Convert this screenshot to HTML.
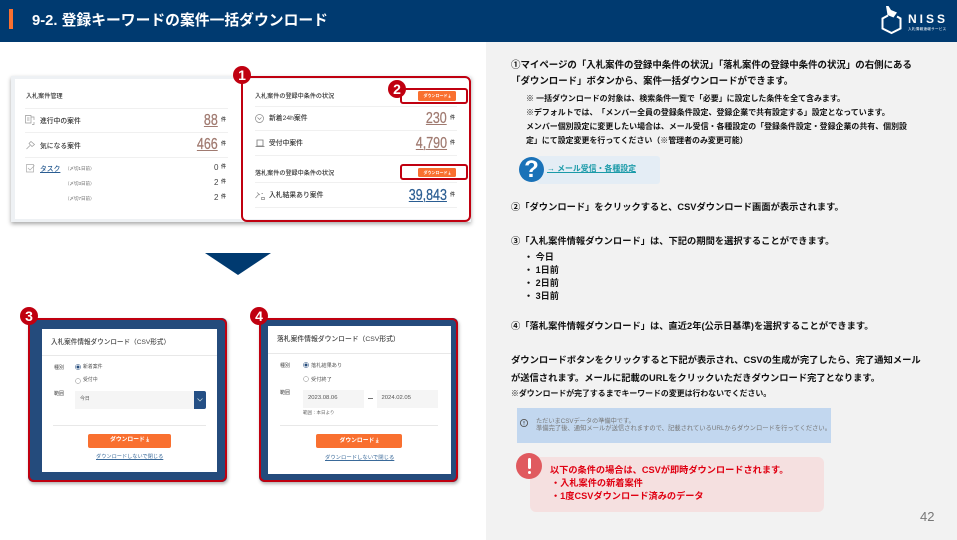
<!DOCTYPE html>
<html lang="ja"><head><meta charset="utf-8">
<style>
html,body{margin:0;padding:0;background:#fff}
#p{position:relative;width:957px;height:540px;overflow:hidden;background:#fff;font-family:"Liberation Sans","Noto Sans CJK JP",sans-serif;color:#333;filter:blur(.3px)}
#p div,#p span.t,#p a{position:absolute}
.t{white-space:nowrap;line-height:1;position:absolute}
.b{font-weight:700;color:#111}
.r{border:2px solid #c00010;box-sizing:border-box;border-radius:6px}
.n{width:18px;height:18px;border-radius:50%;background:#c00010;color:#fff;font:700 14px/18px "Liberation Sans",sans-serif;text-align:center}
.l{height:1px;background:#f0f0f0}
.num{font-family:"Liberation Sans",sans-serif;text-decoration:underline;text-decoration-thickness:1px;transform:scaleX(.78);transform-origin:100% 50%;color:#a07a70;font-size:16px;-webkit-text-stroke:.25px currentColor}
.btn{background:#f97030;border-radius:1.5px;color:#fff;font-weight:700;text-align:center}
.m{font-size:6.8px;color:#333;font-weight:500}
.s{font-size:6.1px;color:#333;font-weight:500}
.k{font-size:5px;color:#444;font-weight:700}
svg{position:absolute;overflow:visible}
</style></head><body><div id="p">
<div style="left:0;top:0;width:957px;height:42px;background:#003a70"></div>
<div style="left:9px;top:9px;width:4px;height:20px;background:#f97030"></div>
<span class="t" style="left:32px;top:13.500px;font-size:14.800px;font-weight:700;color:#fff">9-2. 登録キーワードの案件一括ダウンロード</span>

<svg style="left:879px;top:5px" width="26" height="30" viewBox="0 0 26 30"><path d="M9 10.500 L3.500 13.500 V23.500 L12.500 28 L21.500 23.500 V13.500 L18 11.500" fill="none" stroke="#fff" stroke-width="2"/><path d="M7 1 L9.500 1 L12 5 L18 7.500 L14.500 12.500 L8.500 10Z" fill="#fff"/></svg>
<span class="t" style="left:908px;top:12.500px;font-size:12px;font-weight:700;color:#fff;letter-spacing:3px">NISS</span>
<span class="t" style="left:908px;top:28px;font-size:3.700px;color:#fff;letter-spacing:.15px">入札情報速報サービス</span>

<div style="left:486px;top:42px;width:471px;height:498px;background:#f2f2f2"></div>

<!-- left card -->
<div style="left:11px;top:76px;width:460px;height:146px;background:#eef1f4;box-shadow:0 2px 4px rgba(0,0,0,.35)"></div>
<div style="left:15px;top:79px;width:454px;height:140px;background:#fff"></div>
<span class="t s" style="left:26px;top:93.500px">入札案件管理</span>
<div class="l" style="left:25px;top:108px;width:203px"></div>
<div class="l" style="left:25px;top:132px;width:203px"></div>
<div class="l" style="left:25px;top:157px;width:203px"></div>
<svg style="left:25px;top:115px" width="10" height="10" fill="none" stroke="#999" stroke-width=".7"><path d="M.5 .5H6V8H.5ZM6 2H9V5M7 9.500H9V7M2 3H4.500M2 5H4.500"/></svg>
<span class="t m" style="left:40px;top:119px">進行中の案件</span>
<span class="t num" style="right:739px;top:113px">88</span><span class="t k" style="left:221px;top:118px">件</span>
<svg style="left:26px;top:140px" width="9" height="10" fill="none" stroke="#999" stroke-width=".7"><path d="M.5 9L4 5.500M3 3.500L6 6.500M5 1.500L8.500 4.500L6 6.500L3 3.500Z"/></svg>
<span class="t m" style="left:40px;top:144px">気になる案件</span>
<span class="t num" style="right:739px;top:137px">466</span><span class="t k" style="left:221px;top:142px">件</span>
<svg style="left:26px;top:164px" width="9" height="9" fill="none" stroke="#aaa" stroke-width=".7"><path d="M.5 .5H7.500V8H.5ZM2 4L4 6L8.500 1.500"/></svg>
<span class="t" style="left:40px;top:166.500px;font-size:6.800px;font-weight:500;color:#2a5d92;text-decoration:underline">タスク</span>
<span class="t" style="left:65px;top:166.500px;font-size:4.500px;color:#666">（〆切1日前）</span>
<span class="t" style="left:65px;top:181.500px;font-size:4.500px;color:#666">（〆切3日前）</span>
<span class="t" style="left:65px;top:196.500px;font-size:4.500px;color:#666">（〆切7日前）</span>
<span class="t" style="left:214px;top:164px;font-size:8px;color:#444">0</span><span class="t k" style="left:221px;top:165px">件</span>
<span class="t" style="left:214px;top:179px;font-size:8px;color:#444">2</span><span class="t k" style="left:221px;top:180px">件</span>
<span class="t" style="left:214px;top:194px;font-size:8px;color:#444">2</span><span class="t k" style="left:221px;top:195px">件</span>

<span class="t s" style="left:255px;top:93.500px">入札案件の登録中条件の状況</span>
<div class="l" style="left:255px;top:106px;width:202px"></div>
<div class="l" style="left:255px;top:130px;width:202px"></div>
<div class="l" style="left:255px;top:155px;width:202px"></div>
<div class="l" style="left:255px;top:182px;width:202px"></div>
<div class="l" style="left:255px;top:207px;width:202px"></div>
<svg style="left:255px;top:114px" width="10" height="10" fill="none" stroke="#888" stroke-width=".7"><circle cx="4.500" cy="4.500" r="4"/><path d="M2.500 3.500L4.500 5.500L6.500 3.500"/></svg>
<span class="t m" style="left:269px;top:116px">新着24h案件</span>
<span class="t num" style="right:510px;top:111px">230</span><span class="t k" style="left:450px;top:116px">件</span>
<svg style="left:255px;top:139px" width="10" height="9" fill="none" stroke="#777" stroke-width=".8"><path d="M2 1H8V7H2ZM.5 7.500H9.500"/></svg>
<span class="t m" style="left:269px;top:141px">受付中案件</span>
<span class="t num" style="right:510px;top:136px">4,790</span><span class="t k" style="left:450px;top:141px">件</span>
<span class="t s" style="left:255px;top:170.500px">落札案件の登録中条件の状況</span>
<svg style="left:255px;top:191px" width="10" height="10" fill="none" stroke="#888" stroke-width=".7"><path d="M.5 7L4 3M2 1.500L5 4M6.500 2.500H8M6.500 8.500H9.500V6.500H6.500Z"/></svg>
<span class="t m" style="left:269px;top:193px">入札結果あり案件</span>
<span class="t num" style="right:510px;top:188px;color:#2a5d92">39,843</span><span class="t k" style="left:450px;top:193px">件</span>

<div class="btn" style="left:418px;top:91px;width:38px;height:9.500px;font-size:4px;line-height:9.500px">ダウンロード ⤓</div>
<div class="btn" style="left:418px;top:167.500px;width:38px;height:9.500px;font-size:4px;line-height:9.500px">ダウンロード ⤓</div>
<div class="r" style="left:241px;top:76px;width:230px;height:146px"></div>
<div class="r" style="left:400px;top:88px;width:67.500px;height:15.500px;border-radius:3px"></div>
<div class="r" style="left:400px;top:164px;width:67.500px;height:15.500px;border-radius:3px"></div>
<div class="n" style="left:233px;top:66px">1</div>
<div class="n" style="left:388px;top:80px">2</div>

<svg style="left:205px;top:253px" width="66" height="22"><path d="M0 0H66L33 22Z" fill="#003a70"/></svg>

<!-- modal 3 -->
<div style="left:28px;top:318px;width:199px;height:164px;background:#244b7c;box-shadow:1px 2px 3px rgba(0,0,0,.3);border-radius:5px"></div>
<div style="left:42px;top:329px;width:175px;height:143px;background:#fff"></div>
<span class="t" style="left:51px;top:339.500px;font-size:6.600px;font-weight:500;color:#444">入札案件情報ダウンロード（CSV形式）</span>
<div class="l" style="left:42px;top:355px;width:175px;background:#e8e8e8"></div>
<span class="t k" style="left:54px;top:365.500px;font-weight:400">種別</span>
<svg style="left:75px;top:364px" width="7" height="7"><circle cx="3" cy="3" r="2.600" fill="#fff" stroke="#244b7c" stroke-width=".5"/><circle cx="3" cy="3" r="1.500" fill="#244b7c"/></svg>
<span class="t" style="left:83px;top:365.500px;font-size:4.900px;color:#555">新着案件</span>
<svg style="left:75px;top:378px" width="7" height="7"><circle cx="3" cy="3" r="2.500" fill="#fff" stroke="#888" stroke-width=".5"/></svg>
<span class="t" style="left:83px;top:379px;font-size:4.900px;color:#555">受付中</span>
<span class="t k" style="left:54px;top:392px;font-weight:400">範囲</span>
<div style="left:75px;top:391px;width:119px;height:18px;background:#f5f5f5"></div>
<div style="left:194px;top:391px;width:12px;height:18px;background:#244f85;border-radius:0 2px 2px 0"></div>
<svg style="left:197px;top:398px" width="6" height="4" fill="none" stroke="#cdd" stroke-width=".7"><path d="M.5 .5L3 3L5.500 .5"/></svg>
<span class="t" style="left:80px;top:398px;font-size:4.900px;color:#555">今日</span>
<div class="l" style="left:53px;top:425px;width:153px;background:#e8e8e8"></div>
<div class="btn" style="left:88px;top:434px;width:83px;height:13.500px;font-size:5.800px;line-height:13.500px;border-radius:2px">ダウンロード ⤓</div>
<span class="t" style="left:96px;top:454.500px;font-size:5.200px;color:#3a6a9a;text-decoration:underline">ダウンロードしないで閉じる</span>
<div class="r" style="left:28px;top:318px;width:199px;height:164px"></div>
<div class="n" style="left:20px;top:307px">3</div>

<!-- modal 4 -->
<div style="left:259px;top:318px;width:199px;height:164px;background:#244b7c;box-shadow:1px 2px 3px rgba(0,0,0,.3);border-radius:5px"></div>
<div style="left:268px;top:326px;width:183px;height:148px;background:#fff"></div>
<span class="t" style="left:277px;top:336.500px;font-size:6.800px;font-weight:500;color:#444">落札案件情報ダウンロード（CSV形式）</span>
<div class="l" style="left:268px;top:353px;width:183px;background:#e8e8e8"></div>
<span class="t k" style="left:280px;top:363.500px;font-weight:400">種別</span>
<svg style="left:303px;top:362px" width="7" height="7"><circle cx="3" cy="3" r="2.600" fill="#fff" stroke="#244b7c" stroke-width=".5"/><circle cx="3" cy="3" r="1.500" fill="#244b7c"/></svg>
<span class="t" style="left:311px;top:363.500px;font-size:5.200px;color:#555">落札結果あり</span>
<svg style="left:303px;top:376px" width="7" height="7"><circle cx="3" cy="3" r="2.500" fill="#fff" stroke="#888" stroke-width=".5"/></svg>
<span class="t" style="left:311px;top:377.500px;font-size:5.200px;color:#555">受付終了</span>
<span class="t k" style="left:280px;top:391px;font-weight:400">範囲</span>
<div style="left:303px;top:390px;width:61px;height:18px;background:#f5f5f5"></div>
<div style="left:377px;top:390px;width:61px;height:18px;background:#f5f5f5"></div>
<span class="t" style="left:308px;top:396px;font-size:5.900px;color:#555">2023.08.06</span>
<span class="t" style="left:381.500px;top:396px;font-size:5.900px;color:#555">2024.02.05</span>
<div style="left:368px;top:398px;width:5px;height:1px;background:#777"></div>
<span class="t" style="left:303px;top:410.500px;font-size:4.500px;color:#666">範囲：本日より</span>
<div class="l" style="left:280px;top:425px;width:158px;background:#e8e8e8"></div>
<div class="btn" style="left:316px;top:434px;width:86px;height:14px;font-size:5.800px;line-height:14px;border-radius:2px">ダウンロード ⤓</div>
<span class="t" style="left:325px;top:455.500px;font-size:5.350px;color:#3a6a9a;text-decoration:underline">ダウンロードしないで閉じる</span>
<div class="r" style="left:259px;top:318px;width:199px;height:164px"></div>
<div class="n" style="left:250px;top:307px">4</div>

<!-- right text -->
<span class="t b" style="left:511px;top:60.500px;font-size:9.450px">①マイページの「入札案件の登録中条件の状況」「落札案件の登録中条件の状況」の右側にある</span>
<span class="t b" style="left:511px;top:77px;font-size:9.450px">「ダウンロード」ボタンから、案件一括ダウンロードができます。</span>
<span class="t b" style="left:526px;top:95px;font-size:7.950px">※ 一括ダウンロードの対象は、検索条件一覧で「必要」に設定した条件を全て含みます。</span>
<span class="t b" style="left:526px;top:109px;font-size:7.950px">※デフォルトでは、「メンバー全員の登録条件設定、登録企業で共有設定する」設定となっています。</span>
<span class="t b" style="left:526px;top:123px;font-size:7.950px">メンバー個別設定に変更したい場合は、メール受信・各種設定の「登録条件設定・登録企業の共有、個別設</span>
<span class="t b" style="left:526px;top:137px;font-size:7.950px">定」にて設定変更を行ってください（※管理者のみ変更可能）</span>
<div style="left:537px;top:156px;width:123px;height:28px;background:#e4edf5;border-radius:3px"></div>
<div style="left:519px;top:157px;width:25px;height:25px;border-radius:50%;background:#1a72b8;color:#fff;font:700 24px/25px 'Liberation Sans',sans-serif;text-align:center">?</div>
<span class="t" style="left:547px;top:165px;font-size:7.900px;font-weight:700;color:#1a9aa8;text-decoration:underline">→ メール受信・各種設定</span>
<span class="t b" style="left:511px;top:202.500px;font-size:9.270px">②「ダウンロード」をクリックすると、CSVダウンロード画面が表示されます。</span>
<span class="t b" style="left:511px;top:237px;font-size:9.270px">③「入札案件情報ダウンロード」は、下記の期間を選択することができます。</span>
<span class="t b" style="left:524px;top:253px;font-size:9.100px">・ 今日</span>
<span class="t b" style="left:524px;top:266px;font-size:9.100px">・ 1日前</span>
<span class="t b" style="left:524px;top:279px;font-size:9.100px">・ 2日前</span>
<span class="t b" style="left:524px;top:292px;font-size:9.100px">・ 3日前</span>
<span class="t b" style="left:511px;top:322px;font-size:9.270px">④「落札案件情報ダウンロード」は、直近2年(公示日基準)を選択することができます。</span>
<span class="t b" style="left:511px;top:356px;font-size:9.300px">ダウンロードボタンをクリックすると下記が表示され、CSVの生成が完了したら、完了通知メール</span>
<span class="t b" style="left:511px;top:374px;font-size:9.280px">が送信されます。メールに記載のURLをクリックいただきダウンロード完了となります。</span>
<span class="t b" style="left:511px;top:390px;font-size:7.900px">※ダウンロードが完了するまでキーワードの変更は行わないでください。</span>

<div style="left:517px;top:408px;width:314px;height:35px;background:#c2d7ef"></div>
<svg style="left:520px;top:419px" width="8" height="8" fill="none" stroke="#555" stroke-width=".9"><circle cx="4" cy="4" r="3.600"/><path d="M4 2V4.500M4 5.500V6.200"/></svg>
<span class="t" style="left:536px;top:419px;font-size:6.200px;color:#777">ただいまCSVデータの準備中です。</span>
<span class="t" style="left:536px;top:425.500px;font-size:6.300px;color:#777">準備完了後、通知メールが送信されますので、記載されているURLからダウンロードを行ってください。</span>

<div style="left:530px;top:457px;width:294px;height:55px;background:#f5e0e0;border-radius:6px"></div>
<div style="left:516px;top:453px;width:26px;height:26px;border-radius:50%;background:#e05a5f"></div>
<div style="left:527.500px;top:458px;width:3px;height:11px;background:#fff;border-radius:1.500px"></div>
<div style="left:527.500px;top:471px;width:3px;height:3px;background:#fff;border-radius:50%"></div>
<span class="t" style="left:550px;top:466px;font-size:9.200px;font-weight:700;color:#e00012">以下の条件の場合は、CSVが即時ダウンロードされます。</span>
<span class="t" style="left:551px;top:479px;font-size:9.200px;font-weight:700;color:#e00012">・入札案件の新着案件</span>
<span class="t" style="left:551px;top:492px;font-size:9.200px;font-weight:700;color:#e00012">・1度CSVダウンロード済みのデータ</span>
<span class="t" style="left:920px;top:510px;font-size:13px;color:#777">42</span>
</div></body></html>
